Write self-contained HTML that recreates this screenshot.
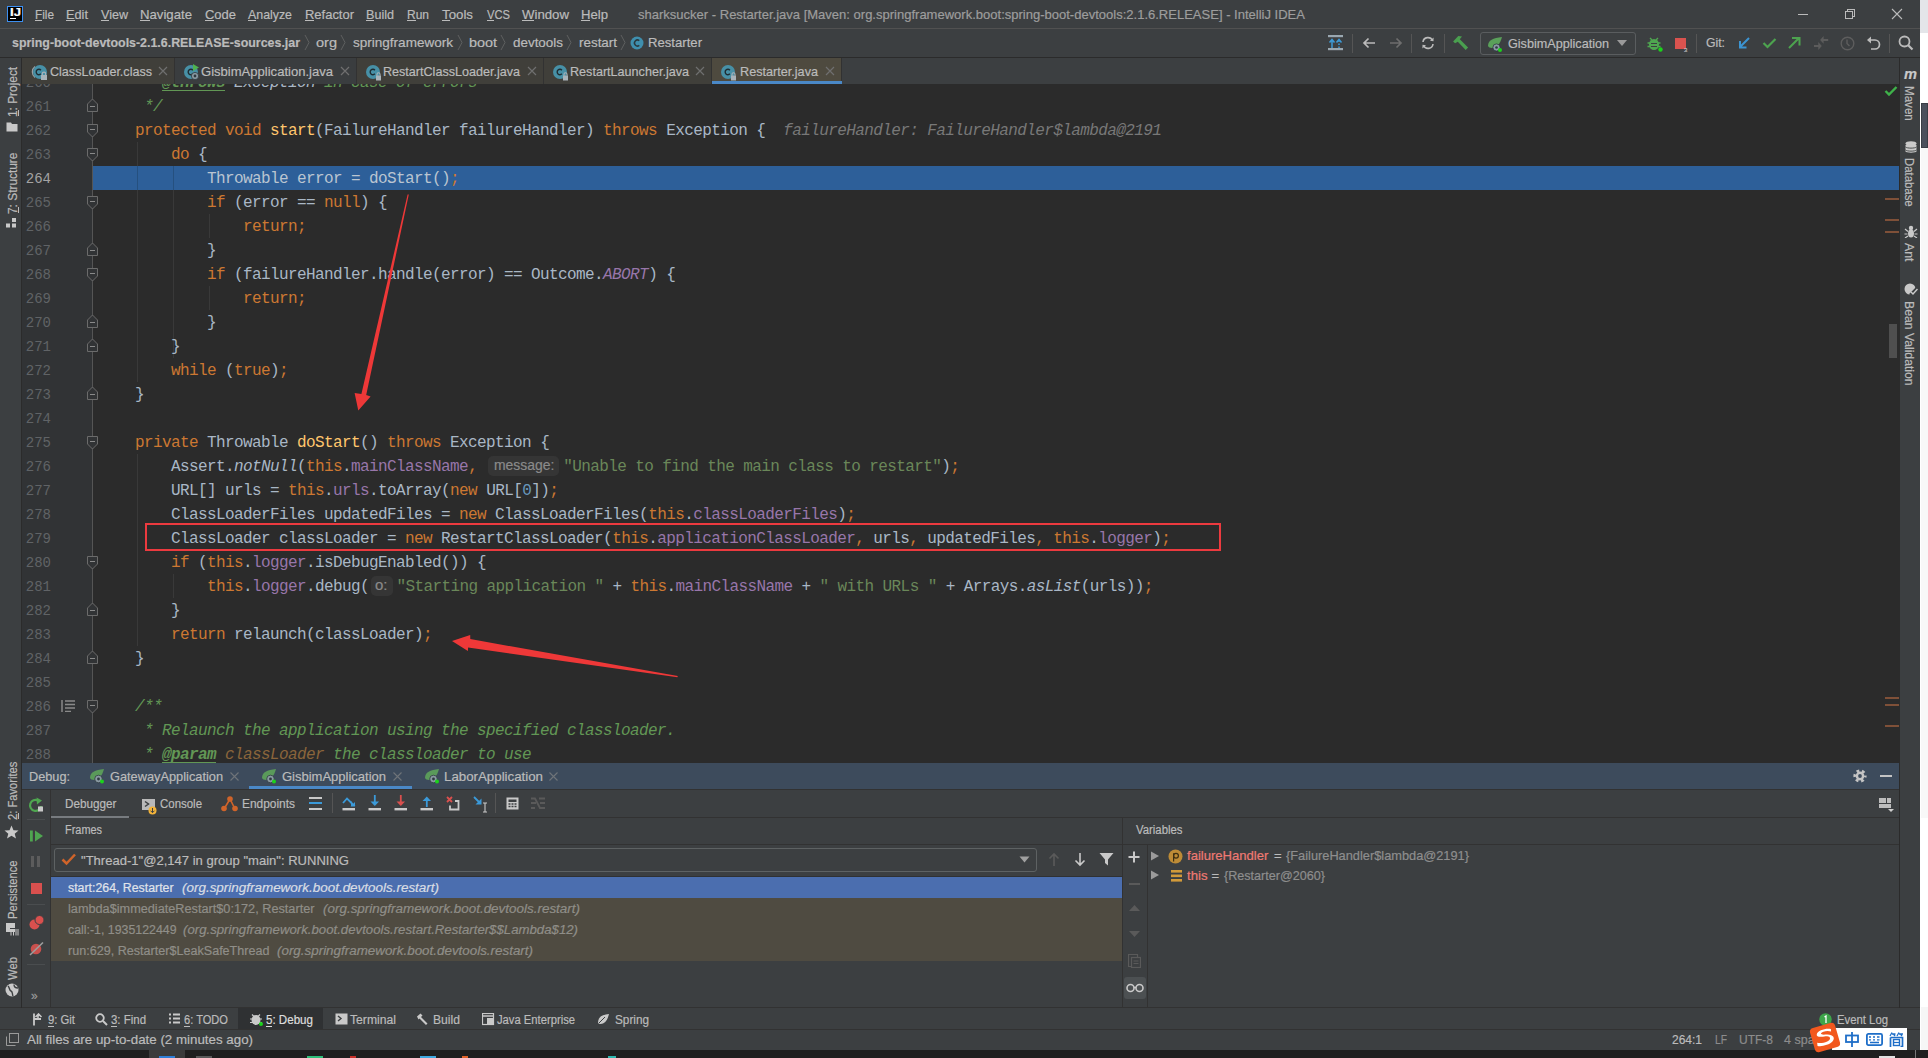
<!DOCTYPE html><html><head><meta charset="utf-8"><style>
*{margin:0;padding:0;box-sizing:border-box}
html,body{width:1928px;height:1058px;overflow:hidden;background:#fafafa}
body{position:relative;font-family:"Liberation Sans", sans-serif;font-size:13px;color:#bbbbbb}
.a{position:absolute;display:block}
.t{position:absolute;white-space:pre;line-height:1;-webkit-text-stroke:0.2px currentColor}
.code{position:absolute;left:99px;white-space:pre;font-family:"Liberation Mono", monospace;font-size:16px;letter-spacing:-0.6px;line-height:24px;height:24px;color:#a9b7c6}
.ln{position:absolute;left:11px;width:40px;text-align:right;font-family:"Liberation Mono", monospace;font-size:14px;line-height:24px;color:#606366}
.k{color:#cc7832} .m{color:#ffc66d} .f{color:#9876aa} .fi{color:#9876aa;font-style:italic}
.s{color:#6a8759} .n{color:#6897bb} .c{color:#629755;font-style:italic} .i{font-style:italic}
.hv{color:#787878;font-style:italic}
.cb{color:#629755;font-style:italic;font-weight:bold;text-decoration:underline;text-underline-offset:3px}
.cp{color:#8a653b;font-style:italic}
</style></head><body>
<div class="a" style="left:0px;top:0px;width:1920px;height:1050px;background:#3c3f41;"></div>
<div class="a" style="left:1920px;top:0px;width:8px;height:33px;background:#e4e5e9;"></div>
<div class="a" style="left:1920px;top:33px;width:8px;height:1017px;background:#ffffff;"></div>
<div class="a" style="left:1921px;top:103px;width:7px;height:45px;background:#4b505c;border:1px solid #3a3e46"></div>
<div class="a" style="left:1921px;top:148px;width:7px;height:670px;background:#f8f8f8;"></div>
<div class="a" style="left:1921px;top:1007px;width:7px;height:43px;background:#f6f6f6;"></div>
<div class="a" style="left:0px;top:1050px;width:1928px;height:8px;background:#1f1f1f;"></div>
<div class="a" style="left:149px;top:1050px;width:36px;height:8px;background:#3b3b3b;"></div>
<div class="a" style="left:0px;top:28px;width:1920px;height:1px;background:#515151;"></div>
<div class="a" style="left:7px;top:6px;width:16px;height:16px;background:#000;border:1px solid #3d8ff0"></div>
<div class="t" style="left:9.5px;top:8.04px;font-size:10px;color:#ffffff;font-weight:bold;transform:scaleX(1.3190);transform-origin:0 0;">IJ</div>
<div class="a" style="left:10px;top:18px;width:6px;height:1px;background:#ffffff;"></div>
<div class="t" style="left:35px;top:8.00px;font-size:13px;color:#bbbbbb;transform:scaleX(0.9070);transform-origin:0 0;">File</div>
<div class="a" style="left:35px;top:20px;width:7px;height:1px;background:#bbbbbb;"></div>
<div class="t" style="left:66px;top:8.00px;font-size:13px;color:#bbbbbb;transform:scaleX(0.9821);transform-origin:0 0;">Edit</div>
<div class="a" style="left:66px;top:20px;width:9px;height:1px;background:#bbbbbb;"></div>
<div class="t" style="left:101px;top:8.00px;font-size:13px;color:#bbbbbb;transform:scaleX(0.9663);transform-origin:0 0;">View</div>
<div class="a" style="left:101px;top:20px;width:8px;height:1px;background:#bbbbbb;"></div>
<div class="t" style="left:140px;top:8.00px;font-size:13px;color:#bbbbbb;transform:scaleX(1.0135);transform-origin:0 0;">Navigate</div>
<div class="a" style="left:140px;top:20px;width:10px;height:1px;background:#bbbbbb;"></div>
<div class="t" style="left:205px;top:8.00px;font-size:13px;color:#bbbbbb;transform:scaleX(0.9975);transform-origin:0 0;">Code</div>
<div class="a" style="left:205px;top:20px;width:9px;height:1px;background:#bbbbbb;"></div>
<div class="t" style="left:248px;top:8.00px;font-size:13px;color:#bbbbbb;transform:scaleX(0.9514);transform-origin:0 0;">Analyze</div>
<div class="a" style="left:248px;top:20px;width:8px;height:1px;background:#bbbbbb;"></div>
<div class="t" style="left:305px;top:8.00px;font-size:13px;color:#bbbbbb;transform:scaleX(0.9973);transform-origin:0 0;">Refactor</div>
<div class="a" style="left:305px;top:20px;width:9px;height:1px;background:#bbbbbb;"></div>
<div class="t" style="left:366px;top:8.00px;font-size:13px;color:#bbbbbb;transform:scaleX(0.9686);transform-origin:0 0;">Build</div>
<div class="a" style="left:366px;top:20px;width:8px;height:1px;background:#bbbbbb;"></div>
<div class="t" style="left:407px;top:8.00px;font-size:13px;color:#bbbbbb;transform:scaleX(0.9225);transform-origin:0 0;">Run</div>
<div class="a" style="left:407px;top:20px;width:9px;height:1px;background:#bbbbbb;"></div>
<div class="t" style="left:442px;top:8.00px;font-size:13px;color:#bbbbbb;transform:scaleX(1.0215);transform-origin:0 0;">Tools</div>
<div class="a" style="left:442px;top:20px;width:8px;height:1px;background:#bbbbbb;"></div>
<div class="t" style="left:487px;top:8.00px;font-size:13px;color:#bbbbbb;transform:scaleX(0.8605);transform-origin:0 0;">VCS</div>
<div class="a" style="left:487px;top:20px;width:7px;height:1px;background:#bbbbbb;"></div>
<div class="t" style="left:522px;top:8.00px;font-size:13px;color:#bbbbbb;transform:scaleX(1.0165);transform-origin:0 0;">Window</div>
<div class="a" style="left:522px;top:20px;width:12px;height:1px;background:#bbbbbb;"></div>
<div class="t" style="left:581px;top:8.00px;font-size:13px;color:#bbbbbb;transform:scaleX(1.0099);transform-origin:0 0;">Help</div>
<div class="a" style="left:581px;top:20px;width:9px;height:1px;background:#bbbbbb;"></div>
<div class="t" style="left:638px;top:8.00px;font-size:13px;color:#9d9d9d;transform:scaleX(1.0012);transform-origin:0 0;">sharksucker - Restarter.java [Maven: org.springframework.boot:spring-boot-devtools:2.1.6.RELEASE] - IntelliJ IDEA</div>
<div class="a" style="left:1798px;top:14px;width:10px;height:1px;background:#bbbbbb;"></div>
<div class="a" style="left:1847px;top:9px;width:8px;height:8px;background:transparent;border:1px solid #bbbbbb"></div>
<div class="a" style="left:1845px;top:11px;width:8px;height:8px;background:#3c3f41;border:1px solid #bbbbbb"></div>
<svg class="a" style="left:1891px;top:8px;" width="12" height="12" viewBox="0 0 12 12"><path d="M1 1L11 11M11 1L1 11" stroke="#bbbbbb" stroke-width="1.1"/></svg>
<div class="a" style="left:0px;top:57px;width:1920px;height:1px;background:#2b2b2b;"></div>
<div class="t" style="left:12px;top:36.00px;font-size:13px;color:#bbbbbb;font-weight:bold;transform:scaleX(0.9538);transform-origin:0 0;">spring-boot-devtools-2.1.6.RELEASE-sources.jar</div>
<svg class="a" style="left:304px;top:35px;" width="6" height="15" viewBox="0 0 6 15"><path d="M1 0L5 7.5L1 15" stroke="#5e6060" fill="none" stroke-width="1"/></svg>
<svg class="a" style="left:340px;top:35px;" width="6" height="15" viewBox="0 0 6 15"><path d="M1 0L5 7.5L1 15" stroke="#5e6060" fill="none" stroke-width="1"/></svg>
<svg class="a" style="left:457px;top:35px;" width="6" height="15" viewBox="0 0 6 15"><path d="M1 0L5 7.5L1 15" stroke="#5e6060" fill="none" stroke-width="1"/></svg>
<svg class="a" style="left:500px;top:35px;" width="6" height="15" viewBox="0 0 6 15"><path d="M1 0L5 7.5L1 15" stroke="#5e6060" fill="none" stroke-width="1"/></svg>
<svg class="a" style="left:566px;top:35px;" width="6" height="15" viewBox="0 0 6 15"><path d="M1 0L5 7.5L1 15" stroke="#5e6060" fill="none" stroke-width="1"/></svg>
<svg class="a" style="left:620px;top:35px;" width="6" height="15" viewBox="0 0 6 15"><path d="M1 0L5 7.5L1 15" stroke="#5e6060" fill="none" stroke-width="1"/></svg>
<div class="t" style="left:316px;top:36.00px;font-size:13px;color:#bbbbbb;transform:scaleX(1.1177);transform-origin:0 0;">org</div>
<div class="t" style="left:353px;top:36.00px;font-size:13px;color:#bbbbbb;transform:scaleX(1.0408);transform-origin:0 0;">springframework</div>
<div class="t" style="left:469px;top:36.00px;font-size:13px;color:#bbbbbb;transform:scaleX(1.1066);transform-origin:0 0;">boot</div>
<div class="t" style="left:513px;top:36.00px;font-size:13px;color:#bbbbbb;transform:scaleX(1.0326);transform-origin:0 0;">devtools</div>
<div class="t" style="left:579px;top:36.00px;font-size:13px;color:#bbbbbb;transform:scaleX(1.0314);transform-origin:0 0;">restart</div>
<div class="t" style="left:648px;top:36.00px;font-size:13px;color:#bbbbbb;transform:scaleX(1.0101);transform-origin:0 0;">Restarter</div>
<svg class="a" style="left:630px;top:36px;" width="14" height="14" viewBox="0 0 14 14"><circle cx="7" cy="7" r="6.5" fill="#3f8fae"/><path d="M9.3 4.6A3 3 0 1 0 9.3 9.4" stroke="#2a3a40" stroke-width="1.5" fill="none"/></svg>
<div class="a" style="left:1352px;top:34px;width:1px;height:19px;background:#555555;"></div>
<div class="a" style="left:1411px;top:34px;width:1px;height:19px;background:#555555;"></div>
<div class="a" style="left:1444px;top:34px;width:1px;height:19px;background:#555555;"></div>
<div class="a" style="left:1696px;top:34px;width:1px;height:19px;background:#555555;"></div>
<div class="a" style="left:1889px;top:34px;width:1px;height:19px;background:#555555;"></div>
<svg class="a" style="left:1328px;top:35px;" width="16" height="16" viewBox="0 0 16 16"><rect x="0" y="0" width="15" height="2.2" fill="#9aa7b0"/><rect x="0" y="13" width="15" height="2.2" fill="#9aa7b0"/><path d="M4 13V5M1.5 7.5L4 4.5L6.5 7.5" stroke="#3d9ad6" stroke-width="1.5" fill="none"/><path d="M11 13V5" stroke="#3d9ad6" stroke-width="1.5" stroke-dasharray="1.5 1.5" fill="none"/><path d="M8.5 7.5L11 4.5L13.5 7.5" stroke="#3d9ad6" stroke-width="1.5" fill="none"/></svg>
<svg class="a" style="left:1362px;top:37px;" width="14" height="12" viewBox="0 0 14 12"><path d="M13 6H2M6.5 1.5L2 6L6.5 10.5" stroke="#bbbbbb" stroke-width="1.7" fill="none"/></svg>
<svg class="a" style="left:1389px;top:37px;" width="14" height="12" viewBox="0 0 14 12"><path d="M1 6H12M7.5 1.5L12 6L7.5 10.5" stroke="#6e6e6e" stroke-width="1.7" fill="none"/></svg>
<svg class="a" style="left:1421px;top:36px;" width="14" height="14" viewBox="0 0 14 14"><path d="M2 6A5 5 0 0 1 11.5 4.5M12 8A5 5 0 0 1 2.5 9.5" stroke="#bbbbbb" stroke-width="1.6" fill="none"/><path d="M9 4.8L12.5 5.2L12.6 1.6Z M5 9.2L1.5 8.8L1.4 12.4Z" fill="#bbbbbb"/></svg>
<svg class="a" style="left:1446px;top:30px;" width="26" height="24" viewBox="0 0 26 24"><path d="M7.1 11.5L12.3 6L16 6.4L13.8 9.3L22.1 17.4L19.7 19.9L11.8 11.8L9.1 13.3Z" fill="#4a9f4f"/></svg>
<div class="a" style="left:1480px;top:32px;width:156px;height:23px;background:transparent;border:1px solid #5a5d5f;border-radius:3px"></div>
<svg class="a" style="left:1487px;top:36px;" width="18" height="16" viewBox="0 0 18 16"><path d="M1 10C1 4 6 2 15 1C13 8 10 12 5 12C3 12 1.5 11 1 10Z" fill="#5aa05a"/><circle cx="9.5" cy="11.5" r="3.6" fill="#8a9aa3" stroke="#2f3a40" stroke-width="0.8"/><circle cx="9.5" cy="11.5" r="1.3" fill="#2f3a40"/><circle cx="13" cy="14" r="2" fill="#1bd31b"/></svg>
<div class="t" style="left:1508px;top:37.00px;font-size:13px;color:#bbbbbb;transform:scaleX(0.9707);transform-origin:0 0;">GisbimApplication</div>
<svg class="a" style="left:1617px;top:40px;" width="10" height="6" viewBox="0 0 10 6"><path d="M0 0H10L5 6Z" fill="#9a9a9a"/></svg>
<svg class="a" style="left:1647px;top:36px;" width="16" height="16" viewBox="0 0 16 16"><ellipse cx="7" cy="8.5" rx="5" ry="5.5" fill="#4fa650"/><path d="M3 2L5 4M11 2L9 4M0.5 7H13.5M0.5 10.5H13.5" stroke="#4fa650" stroke-width="1.4"/><path d="M4 7.5H10M4 10.5H10" stroke="#3c3f41" stroke-width="1"/><circle cx="13.5" cy="13.5" r="2.2" fill="#1bd31b"/></svg>
<div class="a" style="left:1675px;top:38px;width:11px;height:11px;background:#d9534f;"></div>
<div class="t" style="left:1684px;top:46.92px;font-size:6px;color:#bbbbbb;">3</div>
<div class="t" style="left:1706px;top:36.00px;font-size:13px;color:#bbbbbb;transform:scaleX(0.9395);transform-origin:0 0;">Git:</div>
<svg class="a" style="left:1738px;top:37px;" width="12" height="12" viewBox="0 0 12 12"><path d="M11 1L2 10M2 4V10.5H8.5" stroke="#3c94d1" stroke-width="2" fill="none"/></svg>
<svg class="a" style="left:1762px;top:37px;" width="15" height="12" viewBox="0 0 15 12"><path d="M1.5 6L5.5 10L13.5 2" stroke="#4da34f" stroke-width="2.2" fill="none"/></svg>
<svg class="a" style="left:1788px;top:37px;" width="13" height="12" viewBox="0 0 13 12"><path d="M1 11L11 1M4 1H11.5V8.5" stroke="#4da34f" stroke-width="2" fill="none"/></svg>
<svg class="a" style="left:1808px;top:32px;" width="26" height="22" viewBox="0 0 26 22"><path d="M12.1 8L15.6 4V11.7Z M13.75 14L10.3 10V17.9Z" fill="#5c5c5c"/><path d="M15 8H20.2M6 14H11" stroke="#5c5c5c" stroke-width="2"/></svg>
<svg class="a" style="left:1840px;top:36px;" width="15" height="15" viewBox="0 0 15 15"><circle cx="7.5" cy="7.5" r="6.3" stroke="#5d5d5d" stroke-width="1.4" fill="none"/><path d="M7 3.5V7.5L9.5 10" stroke="#5d5d5d" stroke-width="1.4" fill="none"/></svg>
<svg class="a" style="left:1866px;top:36px;" width="15" height="15" viewBox="0 0 15 15"><path d="M4 4H9A4.5 4.5 0 0 1 9 13H5" stroke="#bbbbbb" stroke-width="1.7" fill="none"/><path d="M1 4L5 0.5V7.5Z" fill="#bbbbbb"/></svg>
<svg class="a" style="left:1898px;top:35px;" width="16" height="16" viewBox="0 0 16 16"><circle cx="6.5" cy="6.5" r="5" stroke="#bbbbbb" stroke-width="1.8" fill="none"/><path d="M10 10L14.5 14.5" stroke="#bbbbbb" stroke-width="2.2"/></svg>
<div class="a" style="left:21px;top:84px;width:1879px;height:679px;background:#2b2b2b;"></div>
<div class="a" style="left:21px;top:84px;width:72px;height:679px;background:#313335;"></div>
<div class="a" style="left:92px;top:84px;width:1px;height:679px;background:#555555;"></div>
<div class="a" style="left:93px;top:166px;width:1807px;height:24px;background:#2d5f99;"></div>
<div class="a" style="left:137px;top:142px;width:1px;height:24px;background:#393939;"></div>
<div class="a" style="left:137px;top:166px;width:1px;height:24px;background:#25507f;"></div>
<div class="a" style="left:137px;top:190px;width:1px;height:192px;background:#393939;"></div>
<div class="a" style="left:173px;top:166px;width:1px;height:0px;background:#393939;"></div>
<div class="a" style="left:173px;top:166px;width:1px;height:24px;background:#25507f;"></div>
<div class="a" style="left:173px;top:190px;width:1px;height:168px;background:#393939;"></div>
<div class="a" style="left:209px;top:214px;width:1px;height:24px;background:#393939;"></div>
<div class="a" style="left:209px;top:286px;width:1px;height:24px;background:#393939;"></div>
<div class="a" style="left:137px;top:454px;width:1px;height:192px;background:#393939;"></div>
<div class="a" style="left:173px;top:574px;width:1px;height:24px;background:#393939;"></div>
<div class="a" style="left:93px;top:84px;width:1807px;height:679px;overflow:hidden">
<div class="code" style="left:6px;top:-13px"><span class="c">     * </span><span class="cb">@throws</span><span class="i"> Exception</span><span class="c"> in case of errors</span></div>
<div class="code" style="left:6px;top:11px"><span class="c">     */</span></div>
<div class="code" style="left:6px;top:35px"><span class="k">    protected void </span><span class="m">start</span>(FailureHandler failureHandler) <span class="k">throws</span> Exception {  <span class="hv">failureHandler: FailureHandler$lambda@2191</span></div>
<div class="code" style="left:6px;top:59px"><span class="k">        do</span> {</div>
<div class="code" style="left:6px;top:83px"><span style="color:#bac5d1">            Throwable error = doStart()</span><span class="k">;</span></div>
<div class="code" style="left:6px;top:107px"><span class="k">            if</span> (error == <span class="k">null</span>) {</div>
<div class="code" style="left:6px;top:131px"><span class="k">                return;</span></div>
<div class="code" style="left:6px;top:155px">            }</div>
<div class="code" style="left:6px;top:179px"><span class="k">            if</span> (failureHandler.handle(error) == Outcome.<span class="fi">ABORT</span>) {</div>
<div class="code" style="left:6px;top:203px"><span class="k">                return;</span></div>
<div class="code" style="left:6px;top:227px">            }</div>
<div class="code" style="left:6px;top:251px">        }</div>
<div class="code" style="left:6px;top:275px"><span class="k">        while</span> (<span class="k">true</span>)<span class="k">;</span></div>
<div class="code" style="left:6px;top:299px">    }</div>
<div class="code" style="left:6px;top:347px"><span class="k">    private</span> Throwable <span class="m">doStart</span>() <span class="k">throws</span> Exception {</div>
<div class="code" style="left:6px;top:371px">        Assert.<span class="i">notNull</span>(<span class="k">this</span>.<span class="f">mainClassName</span><span class="k">,</span><span style="display:inline-block;width:86px"></span><span class="s">&quot;Unable to find the main class to restart&quot;</span>)<span class="k">;</span></div>
<div class="code" style="left:6px;top:395px">        URL[] urls = <span class="k">this</span>.<span class="f">urls</span>.toArray(<span class="k">new</span> URL[<span class="n">0</span>])<span class="k">;</span></div>
<div class="code" style="left:6px;top:419px">        ClassLoaderFiles updatedFiles = <span class="k">new</span> ClassLoaderFiles(<span class="k">this</span>.<span class="f">classLoaderFiles</span>)<span class="k">;</span></div>
<div class="code" style="left:6px;top:443px">        ClassLoader classLoader = <span class="k">new</span> RestartClassLoader(<span class="k">this</span>.<span class="f">applicationClassLoader</span><span class="k">,</span> urls<span class="k">,</span> updatedFiles<span class="k">, this</span>.<span class="f">logger</span>)<span class="k">;</span></div>
<div class="code" style="left:6px;top:467px"><span class="k">        if</span> (<span class="k">this</span>.<span class="f">logger</span>.isDebugEnabled()) {</div>
<div class="code" style="left:6px;top:491px"><span class="k">            this</span>.<span class="f">logger</span>.debug(<span style="display:inline-block;width:27.4px"></span><span class="s">&quot;Starting application &quot;</span> + <span class="k">this</span>.<span class="f">mainClassName</span> + <span class="s">&quot; with URLs &quot;</span> + Arrays.<span class="i">asList</span>(urls))<span class="k">;</span></div>
<div class="code" style="left:6px;top:515px">        }</div>
<div class="code" style="left:6px;top:539px"><span class="k">        return</span> relaunch(classLoader)<span class="k">;</span></div>
<div class="code" style="left:6px;top:563px">    }</div>
<div class="code" style="left:6px;top:611px"><span class="c">    /**</span></div>
<div class="code" style="left:6px;top:635px"><span class="c">     * Relaunch the application using the specified classloader.</span></div>
<div class="code" style="left:6px;top:659px"><span class="c">     * </span><span class="cb">@param</span><span class="cp"> classLoader</span><span class="c"> the classloader to use</span></div>
</div>
<div class="a" style="left:488px;top:456px;width:71px;height:19.5px;background:#353535;border-radius:5px"></div>
<div class="t" style="left:493.7px;top:458.15px;font-size:14px;color:#8a8a8a;transform:scaleX(0.9951);transform-origin:0 0;">message:</div>
<div class="a" style="left:371px;top:576px;width:22px;height:19.5px;background:#353535;border-radius:5px"></div>
<div class="t" style="left:375px;top:578.15px;font-size:14px;color:#8a8a8a;transform:scaleX(1.0706);transform-origin:0 0;">o:</div>
<div class="a" style="left:0;top:84px;width:93px;height:679px;overflow:hidden">
<div class="ln" style="top:-13px;color:#606366">260</div>
<div class="ln" style="top:11px;color:#606366">261</div>
<div class="ln" style="top:35px;color:#606366">262</div>
<div class="ln" style="top:59px;color:#606366">263</div>
<div class="ln" style="top:83px;color:#a4a3a3">264</div>
<div class="ln" style="top:107px;color:#606366">265</div>
<div class="ln" style="top:131px;color:#606366">266</div>
<div class="ln" style="top:155px;color:#606366">267</div>
<div class="ln" style="top:179px;color:#606366">268</div>
<div class="ln" style="top:203px;color:#606366">269</div>
<div class="ln" style="top:227px;color:#606366">270</div>
<div class="ln" style="top:251px;color:#606366">271</div>
<div class="ln" style="top:275px;color:#606366">272</div>
<div class="ln" style="top:299px;color:#606366">273</div>
<div class="ln" style="top:323px;color:#606366">274</div>
<div class="ln" style="top:347px;color:#606366">275</div>
<div class="ln" style="top:371px;color:#606366">276</div>
<div class="ln" style="top:395px;color:#606366">277</div>
<div class="ln" style="top:419px;color:#606366">278</div>
<div class="ln" style="top:443px;color:#606366">279</div>
<div class="ln" style="top:467px;color:#606366">280</div>
<div class="ln" style="top:491px;color:#606366">281</div>
<div class="ln" style="top:515px;color:#606366">282</div>
<div class="ln" style="top:539px;color:#606366">283</div>
<div class="ln" style="top:563px;color:#606366">284</div>
<div class="ln" style="top:587px;color:#606366">285</div>
<div class="ln" style="top:611px;color:#606366">286</div>
<div class="ln" style="top:635px;color:#606366">287</div>
<div class="ln" style="top:659px;color:#606366">288</div>
</div>
<svg class="a" style="left:86px;top:124px;" width="13" height="14" viewBox="0 0 13 14"><path d="M1.5 0.5H11.5V8L6.5 13L1.5 8Z" fill="#313335" stroke="#6b6b6b" stroke-width="1"/><path d="M4 5.5H9" stroke="#8a8a8a" stroke-width="1"/></svg>
<svg class="a" style="left:86px;top:148px;" width="13" height="14" viewBox="0 0 13 14"><path d="M1.5 0.5H11.5V8L6.5 13L1.5 8Z" fill="#313335" stroke="#6b6b6b" stroke-width="1"/><path d="M4 5.5H9" stroke="#8a8a8a" stroke-width="1"/></svg>
<svg class="a" style="left:86px;top:196px;" width="13" height="14" viewBox="0 0 13 14"><path d="M1.5 0.5H11.5V8L6.5 13L1.5 8Z" fill="#313335" stroke="#6b6b6b" stroke-width="1"/><path d="M4 5.5H9" stroke="#8a8a8a" stroke-width="1"/></svg>
<svg class="a" style="left:86px;top:268px;" width="13" height="14" viewBox="0 0 13 14"><path d="M1.5 0.5H11.5V8L6.5 13L1.5 8Z" fill="#313335" stroke="#6b6b6b" stroke-width="1"/><path d="M4 5.5H9" stroke="#8a8a8a" stroke-width="1"/></svg>
<svg class="a" style="left:86px;top:436px;" width="13" height="14" viewBox="0 0 13 14"><path d="M1.5 0.5H11.5V8L6.5 13L1.5 8Z" fill="#313335" stroke="#6b6b6b" stroke-width="1"/><path d="M4 5.5H9" stroke="#8a8a8a" stroke-width="1"/></svg>
<svg class="a" style="left:86px;top:556px;" width="13" height="14" viewBox="0 0 13 14"><path d="M1.5 0.5H11.5V8L6.5 13L1.5 8Z" fill="#313335" stroke="#6b6b6b" stroke-width="1"/><path d="M4 5.5H9" stroke="#8a8a8a" stroke-width="1"/></svg>
<svg class="a" style="left:86px;top:700px;" width="13" height="14" viewBox="0 0 13 14"><path d="M1.5 0.5H11.5V8L6.5 13L1.5 8Z" fill="#313335" stroke="#6b6b6b" stroke-width="1"/><path d="M4 5.5H9" stroke="#8a8a8a" stroke-width="1"/></svg>
<svg class="a" style="left:86px;top:98px;" width="13" height="14" viewBox="0 0 13 14"><path d="M1.5 13.5H11.5V6L6.5 1L1.5 6Z" fill="#313335" stroke="#6b6b6b" stroke-width="1"/><path d="M4 8.5H9" stroke="#8a8a8a" stroke-width="1"/></svg>
<svg class="a" style="left:86px;top:242px;" width="13" height="14" viewBox="0 0 13 14"><path d="M1.5 13.5H11.5V6L6.5 1L1.5 6Z" fill="#313335" stroke="#6b6b6b" stroke-width="1"/><path d="M4 8.5H9" stroke="#8a8a8a" stroke-width="1"/></svg>
<svg class="a" style="left:86px;top:314px;" width="13" height="14" viewBox="0 0 13 14"><path d="M1.5 13.5H11.5V6L6.5 1L1.5 6Z" fill="#313335" stroke="#6b6b6b" stroke-width="1"/><path d="M4 8.5H9" stroke="#8a8a8a" stroke-width="1"/></svg>
<svg class="a" style="left:86px;top:338px;" width="13" height="14" viewBox="0 0 13 14"><path d="M1.5 13.5H11.5V6L6.5 1L1.5 6Z" fill="#313335" stroke="#6b6b6b" stroke-width="1"/><path d="M4 8.5H9" stroke="#8a8a8a" stroke-width="1"/></svg>
<svg class="a" style="left:86px;top:386px;" width="13" height="14" viewBox="0 0 13 14"><path d="M1.5 13.5H11.5V6L6.5 1L1.5 6Z" fill="#313335" stroke="#6b6b6b" stroke-width="1"/><path d="M4 8.5H9" stroke="#8a8a8a" stroke-width="1"/></svg>
<svg class="a" style="left:86px;top:602px;" width="13" height="14" viewBox="0 0 13 14"><path d="M1.5 13.5H11.5V6L6.5 1L1.5 6Z" fill="#313335" stroke="#6b6b6b" stroke-width="1"/><path d="M4 8.5H9" stroke="#8a8a8a" stroke-width="1"/></svg>
<svg class="a" style="left:86px;top:650px;" width="13" height="14" viewBox="0 0 13 14"><path d="M1.5 13.5H11.5V6L6.5 1L1.5 6Z" fill="#313335" stroke="#6b6b6b" stroke-width="1"/><path d="M4 8.5H9" stroke="#8a8a8a" stroke-width="1"/></svg>
<svg class="a" style="left:61px;top:700px;" width="15" height="12" viewBox="0 0 15 12"><path d="M1 0V12" stroke="#8a8a8a" stroke-width="1.5"/><path d="M4 1H14M4 4.5H14M4 8H14M4 11.5H10" stroke="#8a8a8a" stroke-width="1.5"/></svg>
<div class="a" style="left:145px;top:523px;width:1076px;height:28px;background:transparent;border:2.5px solid #ec3a3f"></div>
<svg class="a" style="left:0px;top:0px;" width="800" height="760" viewBox="0 0 800 760"><path d="M408.8 194.5L366.2 395L370.6 396.6L358.3 410.5L354.6 392.9L361.4 393.9L407.6 194.5Z" fill="#ee3838"/><path d="M452 641L470.2 635L470.3 639.1L677.8 676.1L677.4 677.2L468.1 647.5L467.9 650.9Z" fill="#ee3838"/></svg>
<div class="a" style="left:1885px;top:198px;width:14px;height:2px;background:#7f5038;"></div>
<div class="a" style="left:1885px;top:219px;width:14px;height:2px;background:#7f5038;"></div>
<div class="a" style="left:1885px;top:231px;width:14px;height:2px;background:#7f5038;"></div>
<div class="a" style="left:1885px;top:697px;width:14px;height:2px;background:#7f5038;"></div>
<div class="a" style="left:1885px;top:704px;width:14px;height:2px;background:#7f5038;"></div>
<div class="a" style="left:1885px;top:725px;width:14px;height:2px;background:#7f5038;"></div>
<div class="a" style="left:1889px;top:324px;width:8px;height:34px;background:#4f4f4f;"></div>
<svg class="a" style="left:1884px;top:85px;" width="14" height="12" viewBox="0 0 14 12"><path d="M1.5 6L5 9.5L12.5 2" stroke="#3fb24a" stroke-width="2.4" fill="none"/></svg>
<div class="a" style="left:21px;top:58px;width:1879px;height:26px;background:#3c3f41;"></div>
<div class="a" style="left:22px;top:58px;width:152px;height:26px;background:#403f3a;"></div>
<div class="a" style="left:174px;top:58px;width:1px;height:26px;background:#323232;"></div>
<svg class="a" style="left:31px;top:64px;" width="17" height="17" viewBox="0 0 17 17"><path d="M4 2.5A7 7 0 0 0 4 13.5" stroke="#9aa0a4" stroke-width="1.2" fill="none"/><circle cx="9" cy="8" r="7" fill="#4790a6"/><path d="M9.9 6.2A2.7 2.7 0 1 0 9.9 9.8" stroke="#1f2d33" stroke-width="1.4" fill="none"/><rect x="10" y="11" width="6" height="5" fill="#a9b3b9"/><path d="M11.3 11.5V9.8A1.7 1.7 0 0 1 14.7 9.8V11.5" stroke="#a9b3b9" stroke-width="1.2" fill="none"/></svg>
<div class="t" style="left:50px;top:65.00px;font-size:13px;color:#bbbbbb;transform:scaleX(0.9668);transform-origin:0 0;">ClassLoader.class</div>
<svg class="a" style="left:158px;top:66px;" width="10" height="10" viewBox="0 0 10 10"><path d="M1 1L9 9M9 1L1 9" stroke="#6f6f6f" stroke-width="1.2"/></svg>
<div class="a" style="left:175px;top:58px;width:181px;height:26px;background:#3a3d3f;"></div>
<div class="a" style="left:356px;top:58px;width:1px;height:26px;background:#323232;"></div>
<svg class="a" style="left:183px;top:64px;" width="17" height="17" viewBox="0 0 17 17"><circle cx="8" cy="8" r="7" fill="#4790a6"/><path d="M9.9 6.2A2.7 2.7 0 1 0 9.9 9.8" stroke="#1f2d33" stroke-width="1.4" fill="none"/><path d="M10 0L16 3.5L10 7Z" fill="#4fb34f"/><circle cx="12" cy="12" r="3.6" fill="#8a9aa3" stroke="#2f3a40" stroke-width="0.8"/><circle cx="12" cy="12" r="1.4" fill="#2f3a40"/></svg>
<div class="t" style="left:201px;top:65.00px;font-size:13px;color:#bbbbbb;transform:scaleX(1.0038);transform-origin:0 0;">GisbimApplication.java</div>
<svg class="a" style="left:340px;top:66px;" width="10" height="10" viewBox="0 0 10 10"><path d="M1 1L9 9M9 1L1 9" stroke="#6f6f6f" stroke-width="1.2"/></svg>
<div class="a" style="left:357px;top:58px;width:186px;height:26px;background:#403f3a;"></div>
<div class="a" style="left:543px;top:58px;width:1px;height:26px;background:#323232;"></div>
<svg class="a" style="left:365px;top:64px;" width="17" height="17" viewBox="0 0 17 17"><circle cx="8" cy="8" r="7" fill="#4790a6"/><path d="M9.9 6.2A2.7 2.7 0 1 0 9.9 9.8" stroke="#1f2d33" stroke-width="1.4" fill="none"/><rect x="11" y="11.5" width="5" height="5" fill="#a9b3b9"/><path d="M12 11.8V10.3A1.5 1.5 0 0 1 15 10.3V11.8" stroke="#a9b3b9" stroke-width="1.1" fill="none"/></svg>
<div class="t" style="left:383px;top:65.00px;font-size:13px;color:#bbbbbb;transform:scaleX(0.9673);transform-origin:0 0;">RestartClassLoader.java</div>
<svg class="a" style="left:527px;top:66px;" width="10" height="10" viewBox="0 0 10 10"><path d="M1 1L9 9M9 1L1 9" stroke="#6f6f6f" stroke-width="1.2"/></svg>
<div class="a" style="left:544px;top:58px;width:167px;height:26px;background:#403f3a;"></div>
<div class="a" style="left:711px;top:58px;width:1px;height:26px;background:#323232;"></div>
<svg class="a" style="left:552px;top:64px;" width="17" height="17" viewBox="0 0 17 17"><circle cx="8" cy="8" r="7" fill="#4790a6"/><path d="M9.9 6.2A2.7 2.7 0 1 0 9.9 9.8" stroke="#1f2d33" stroke-width="1.4" fill="none"/><rect x="11" y="11.5" width="5" height="5" fill="#a9b3b9"/><path d="M12 11.8V10.3A1.5 1.5 0 0 1 15 10.3V11.8" stroke="#a9b3b9" stroke-width="1.1" fill="none"/></svg>
<div class="t" style="left:570px;top:65.00px;font-size:13px;color:#bbbbbb;transform:scaleX(0.9686);transform-origin:0 0;">RestartLauncher.java</div>
<svg class="a" style="left:695px;top:66px;" width="10" height="10" viewBox="0 0 10 10"><path d="M1 1L9 9M9 1L1 9" stroke="#6f6f6f" stroke-width="1.2"/></svg>
<div class="a" style="left:712px;top:58px;width:129px;height:26px;background:#4e4a3f;"></div>
<div class="a" style="left:841px;top:58px;width:1px;height:26px;background:#323232;"></div>
<svg class="a" style="left:720px;top:64px;" width="17" height="17" viewBox="0 0 17 17"><circle cx="8" cy="8" r="7" fill="#4790a6"/><path d="M9.9 6.2A2.7 2.7 0 1 0 9.9 9.8" stroke="#1f2d33" stroke-width="1.4" fill="none"/><rect x="11" y="11.5" width="5" height="5" fill="#a9b3b9"/><path d="M12 11.8V10.3A1.5 1.5 0 0 1 15 10.3V11.8" stroke="#a9b3b9" stroke-width="1.1" fill="none"/></svg>
<div class="t" style="left:740px;top:65.00px;font-size:13px;color:#bbbbbb;transform:scaleX(0.9725);transform-origin:0 0;">Restarter.java</div>
<svg class="a" style="left:825px;top:66px;" width="10" height="10" viewBox="0 0 10 10"><path d="M1 1L9 9M9 1L1 9" stroke="#6f6f6f" stroke-width="1.2"/></svg>
<div class="a" style="left:712px;top:81px;width:130px;height:3px;background:#4a88c7;"></div>
<div class="a" style="left:21px;top:763px;width:1879px;height:245px;background:#3c3f41;"></div>
<div class="a" style="left:21px;top:763px;width:1879px;height:26px;background:#3d4b5c;"></div>
<div class="a" style="left:21px;top:789px;width:1879px;height:1px;background:#323232;"></div>
<div class="t" style="left:28.5px;top:770.00px;font-size:13px;color:#bbbbbb;transform:scaleX(0.9781);transform-origin:0 0;">Debug:</div>
<svg class="a" style="left:89px;top:768px;" width="17" height="16" viewBox="0 0 17 16"><path d="M1 10C1 4 6 2 15 1C13 8 10 12 5 12C3 12 1.5 11 1 10Z" fill="#5a9a5a"/><circle cx="9.5" cy="11" r="3.8" fill="#8a9aa3" stroke="#2f3a40" stroke-width="0.8"/><circle cx="9.5" cy="11" r="1.4" fill="#2f3a40"/><circle cx="13" cy="13.5" r="2" fill="#1bd31b"/></svg>
<div class="t" style="left:109.5px;top:770.00px;font-size:13px;color:#bbbbbb;transform:scaleX(0.9835);transform-origin:0 0;">GatewayApplication</div>
<svg class="a" style="left:230px;top:772px;" width="9" height="9" viewBox="0 0 9 9"><path d="M0.5 0.5L8.5 8.5M8.5 0.5L0.5 8.5" stroke="#6f7479" stroke-width="1.1"/></svg>
<svg class="a" style="left:261px;top:768px;" width="17" height="16" viewBox="0 0 17 16"><path d="M1 10C1 4 6 2 15 1C13 8 10 12 5 12C3 12 1.5 11 1 10Z" fill="#5a9a5a"/><circle cx="9.5" cy="11" r="3.8" fill="#8a9aa3" stroke="#2f3a40" stroke-width="0.8"/><circle cx="9.5" cy="11" r="1.4" fill="#2f3a40"/><circle cx="13" cy="13.5" r="2" fill="#1bd31b"/></svg>
<div class="t" style="left:281.5px;top:770.00px;font-size:13px;color:#bbbbbb;transform:scaleX(0.9996);transform-origin:0 0;">GisbimApplication</div>
<svg class="a" style="left:393px;top:772px;" width="9" height="9" viewBox="0 0 9 9"><path d="M0.5 0.5L8.5 8.5M8.5 0.5L0.5 8.5" stroke="#6f7479" stroke-width="1.1"/></svg>
<svg class="a" style="left:424px;top:768px;" width="17" height="16" viewBox="0 0 17 16"><path d="M1 10C1 4 6 2 15 1C13 8 10 12 5 12C3 12 1.5 11 1 10Z" fill="#5a9a5a"/><circle cx="9.5" cy="11" r="3.8" fill="#8a9aa3" stroke="#2f3a40" stroke-width="0.8"/><circle cx="9.5" cy="11" r="1.4" fill="#2f3a40"/><circle cx="13" cy="13.5" r="2" fill="#1bd31b"/></svg>
<div class="t" style="left:444px;top:770.00px;font-size:13px;color:#bbbbbb;transform:scaleX(1.0222);transform-origin:0 0;">LaborApplication</div>
<svg class="a" style="left:549px;top:772px;" width="9" height="9" viewBox="0 0 9 9"><path d="M0.5 0.5L8.5 8.5M8.5 0.5L0.5 8.5" stroke="#6f7479" stroke-width="1.1"/></svg>
<div class="a" style="left:249px;top:786px;width:163px;height:3px;background:#4a88c7;"></div>
<svg class="a" style="left:1852px;top:768px;" width="16" height="16" viewBox="0 0 16 16"><circle cx="8" cy="8" r="5" fill="none" stroke="#c4c4c4" stroke-width="3.2" stroke-dasharray="2.6 2.636" stroke-dashoffset="1.3"/><circle cx="8" cy="8" r="4.4" fill="#c4c4c4"/><circle cx="8" cy="8" r="1.9" fill="#3d4b5c"/></svg>
<div class="a" style="left:1880px;top:775px;width:12px;height:2px;background:#c4c4c4;"></div>
<div class="a" style="left:50px;top:790px;width:1px;height:218px;background:#323232;"></div>
<div class="a" style="left:27px;top:819px;width:18px;height:1px;background:#4a4d4f;"></div>
<div class="a" style="left:27px;top:904px;width:18px;height:1px;background:#4a4d4f;"></div>
<div class="a" style="left:27px;top:964px;width:18px;height:1px;background:#4a4d4f;"></div>
<svg class="a" style="left:28px;top:797px;" width="17" height="16" viewBox="0 0 17 16"><path d="M13 9A5.5 5.5 0 1 1 10 3.5" stroke="#4fa650" stroke-width="2.2" fill="none"/><path d="M8.5 0.5L14 3.5L9 7.5Z" fill="#4fa650"/><rect x="10" y="9.5" width="5" height="5" fill="#c9c9c9"/></svg>
<svg class="a" style="left:30px;top:830px;" width="14" height="12" viewBox="0 0 14 12"><rect x="0" y="0.5" width="2.8" height="11" fill="#4fa650"/><path d="M5 0.5L13 6L5 11.5Z" fill="#4fa650"/></svg>
<div class="a" style="left:31px;top:856px;width:3px;height:11px;background:#5c5c5c;"></div>
<div class="a" style="left:37px;top:856px;width:3px;height:11px;background:#5c5c5c;"></div>
<div class="a" style="left:31px;top:883px;width:11px;height:11px;background:#d9504e;"></div>
<svg class="a" style="left:29px;top:915px;" width="16" height="15" viewBox="0 0 16 15"><circle cx="5.5" cy="9.5" r="5" fill="#d9504e"/><circle cx="10.5" cy="5" r="4.5" fill="#d9504e" stroke="#3c3f41" stroke-width="1"/></svg>
<svg class="a" style="left:29px;top:941px;" width="16" height="15" viewBox="0 0 16 15"><circle cx="7" cy="8" r="5.3" fill="#c9504d"/><path d="M1 14L14 1.5" stroke="#9e9e9e" stroke-width="1.6"/></svg>
<div class="t" style="left:31px;top:989.84px;font-size:12px;color:#9a9a9a;">»</div>
<div class="a" style="left:51px;top:817px;width:1849px;height:1px;background:#323232;"></div>
<div class="t" style="left:64.5px;top:797.92px;font-size:12.5px;color:#bbbbbb;transform:scaleX(0.9381);transform-origin:0 0;">Debugger</div>
<div class="a" style="left:51px;top:816px;width:78px;height:2px;background:#777b7f;"></div>
<svg class="a" style="left:141px;top:798px;" width="18" height="18" viewBox="0 0 18 18"><rect x="1" y="1" width="13" height="11" fill="#b9b9b9"/><path d="M4 3.5L7.5 6L4 8.5" stroke="#3c3f41" stroke-width="1.5" fill="none"/><circle cx="11.5" cy="12.5" r="4" fill="#f4b43a"/><path d="M11.5 10V14.5M9.5 12.7L11.5 14.7L13.5 12.7" stroke="#3c3f41" stroke-width="1" fill="none"/></svg>
<div class="t" style="left:160px;top:797.92px;font-size:12.5px;color:#bbbbbb;transform:scaleX(0.9158);transform-origin:0 0;">Console</div>
<svg class="a" style="left:221px;top:796px;" width="17" height="16" viewBox="0 0 17 16"><path d="M3 13L9 3L14 13" stroke="#d0642a" stroke-width="1.6" fill="none"/><circle cx="9" cy="3" r="2.8" fill="#d0642a"/><circle cx="3" cy="12.5" r="2.8" fill="#d0642a"/><circle cx="14" cy="12.5" r="2.8" fill="#d0642a"/></svg>
<div class="t" style="left:242px;top:797.92px;font-size:12.5px;color:#bbbbbb;transform:scaleX(0.9533);transform-origin:0 0;">Endpoints</div>
<div class="a" style="left:309px;top:797px;width:13px;height:2.2px;background:#c9c9c9;"></div>
<div class="a" style="left:309px;top:802px;width:13px;height:2.4px;background:#3b9ad9;"></div>
<div class="a" style="left:309px;top:807.5px;width:13px;height:2.2px;background:#c9c9c9;"></div>
<div class="a" style="left:332px;top:793px;width:1px;height:20px;background:#555555;"></div>
<div class="a" style="left:495px;top:793px;width:1px;height:20px;background:#555555;"></div>
<svg class="a" style="left:342px;top:795px;" width="14" height="17" viewBox="0 0 14 17"><path d="M1 8L5 3.5L9.5 8" stroke="#3b9ad9" stroke-width="1.8" fill="none"/><path d="M9 6V11H13.5" fill="#3b9ad9"/><path d="M8.5 11.5L13 11.5L13 7Z" fill="#3b9ad9"/><rect x="0.5" y="13" width="12.5" height="2.4" fill="#c9c9c9"/></svg>
<svg class="a" style="left:368px;top:795px;" width="14" height="17" viewBox="0 0 14 17"><path d="M6.8 0V9" stroke="#3b9ad9" stroke-width="1.8"/><path d="M2.5 6.5L6.8 11L11 6.5Z" fill="#3b9ad9"/><rect x="0.5" y="13" width="12.5" height="2.4" fill="#c9c9c9"/></svg>
<svg class="a" style="left:394px;top:795px;" width="14" height="17" viewBox="0 0 14 17"><path d="M6.8 0V9" stroke="#d9504e" stroke-width="1.8"/><path d="M2.5 6.5L6.8 11L11 6.5Z" fill="#d9504e"/><rect x="0.5" y="13" width="12.5" height="2.4" fill="#c9c9c9"/></svg>
<svg class="a" style="left:420px;top:795px;" width="14" height="17" viewBox="0 0 14 17"><path d="M6.8 12V4" stroke="#3b9ad9" stroke-width="1.8"/><path d="M2.5 6L6.8 1.5L11 6Z" fill="#3b9ad9"/><rect x="0.5" y="13" width="12.5" height="2.4" fill="#c9c9c9"/></svg>
<svg class="a" style="left:446px;top:796px;" width="15" height="16" viewBox="0 0 15 16"><path d="M1 1L6 6M6 1L1 6" stroke="#d9504e" stroke-width="1.8"/><path d="M9 5H12.5V13.5H4V9.5" stroke="#c9c9c9" stroke-width="1.8" fill="none"/></svg>
<svg class="a" style="left:473px;top:796px;" width="16" height="18" viewBox="0 0 16 18"><path d="M1 1L7 7" stroke="#3b9ad9" stroke-width="1.8"/><path d="M2.5 8.5H8.5V2.5Z" fill="#3b9ad9"/><path d="M10 7H14M12 7V16M10 16H14" stroke="#c9c9c9" stroke-width="1.1" fill="none"/></svg>
<svg class="a" style="left:506px;top:797px;" width="13" height="13" viewBox="0 0 13 13"><rect x="0.5" y="0.5" width="12" height="12" fill="#c9c9c9"/><rect x="2.5" y="2.5" width="8" height="2.5" fill="#3c3f41"/><path d="M2.5 7H4.5M5.5 7H7.5M8.5 7H10.5M2.5 9.5H4.5M5.5 9.5H7.5M8.5 9.5H10.5" stroke="#3c3f41" stroke-width="1.3"/></svg>
<svg class="a" style="left:531px;top:797px;" width="14" height="13" viewBox="0 0 14 13"><path d="M0 1.5H4L9 11H14M8 1.5H14M0 6H5M9 6H14M0 11H4" stroke="#5a5a5a" stroke-width="1.8" fill="none"/></svg>
<svg class="a" style="left:1879px;top:798px;" width="16" height="15" viewBox="0 0 16 15"><rect x="0" y="0" width="7" height="5" fill="#bdbdbd"/><rect x="8" y="0" width="4" height="5" fill="#bdbdbd"/><rect x="0" y="6" width="12" height="4" fill="#bdbdbd"/><path d="M9 11H15L12 14Z" fill="#d0d0d0"/></svg>
<div class="a" style="left:51px;top:844px;width:1072px;height:1px;background:#323232;"></div>
<div class="t" style="left:64.5px;top:824.42px;font-size:12.5px;color:#bbbbbb;transform:scaleX(0.8734);transform-origin:0 0;">Frames</div>
<div class="a" style="left:1122px;top:818px;width:1px;height:190px;background:#323232;"></div>
<div class="a" style="left:1123px;top:844px;width:777px;height:1px;background:#323232;"></div>
<div class="t" style="left:1136.4px;top:824.42px;font-size:12.5px;color:#bbbbbb;transform:scaleX(0.9085);transform-origin:0 0;">Variables</div>
<div class="a" style="left:54px;top:848px;width:983px;height:24px;background:transparent;border:1px solid #5e6263;border-radius:3px"></div>
<svg class="a" style="left:61px;top:853px;" width="16" height="13" viewBox="0 0 16 13"><path d="M1.5 6.5L5.5 10.5L14 1.5" stroke="#d0642a" stroke-width="2.5" fill="none"/></svg>
<div class="t" style="left:80.7px;top:853.80px;font-size:13px;color:#bbbbbb;transform:scaleX(1.0030);transform-origin:0 0;">&quot;Thread-1&quot;@2,147 in group &quot;main&quot;: RUNNING</div>
<svg class="a" style="left:1019px;top:856px;" width="11" height="7" viewBox="0 0 11 7"><path d="M0.5 0.5H10.5L5.5 6.5Z" fill="#a0a0a0"/></svg>
<svg class="a" style="left:1048px;top:852px;" width="12" height="15" viewBox="0 0 12 15"><path d="M6 14V2M1.5 6.5L6 2L10.5 6.5" stroke="#5a5a5a" stroke-width="1.6" fill="none"/></svg>
<svg class="a" style="left:1074px;top:852px;" width="12" height="15" viewBox="0 0 12 15"><path d="M6 1V13M1.5 8.5L6 13L10.5 8.5" stroke="#c9c9c9" stroke-width="1.6" fill="none"/></svg>
<svg class="a" style="left:1099px;top:852px;" width="15" height="14" viewBox="0 0 15 14"><path d="M0.5 1H14.5L9 7.5V13.5L6 11V7.5Z" fill="#c9c9c9"/></svg>
<div class="a" style="left:51px;top:876px;width:1072px;height:1px;background:#2f3133;"></div>
<div class="a" style="left:51px;top:877px;width:1071px;height:21px;background:#4b6eaf;"></div>
<div class="t" style="left:67.7px;top:881.62px;font-size:12.5px;color:#e0e4ea;transform:scaleX(0.9868);transform-origin:0 0;">start:264, Restarter </div>
<div class="t" style="left:182px;top:881.62px;font-size:12.5px;color:#d8dde4;font-style:italic;transform:scaleX(1.0754);transform-origin:0 0;">(org.springframework.boot.devtools.restart)</div>
<div class="a" style="left:51px;top:898px;width:1071px;height:63px;background:#4f4b41;"></div>
<div class="t" style="left:67.7px;top:902.72px;font-size:12.5px;color:#8f8e88;transform:scaleX(1.0165);transform-origin:0 0;">lambda$immediateRestart$0:172, Restarter </div>
<div class="t" style="left:323px;top:902.72px;font-size:12.5px;color:#8f8e88;font-style:italic;transform:scaleX(1.0754);transform-origin:0 0;">(org.springframework.boot.devtools.restart)</div>
<div class="t" style="left:67.7px;top:923.72px;font-size:12.5px;color:#8f8e88;transform:scaleX(0.9887);transform-origin:0 0;">call:-1, 1935122449 </div>
<div class="t" style="left:183px;top:923.72px;font-size:12.5px;color:#8f8e88;font-style:italic;transform:scaleX(1.0567);transform-origin:0 0;">(org.springframework.boot.devtools.restart.Restarter$$Lambda$12)</div>
<div class="t" style="left:67.7px;top:944.72px;font-size:12.5px;color:#8f8e88;transform:scaleX(1.0069);transform-origin:0 0;">run:629, Restarter$LeakSafeThread </div>
<div class="t" style="left:277px;top:944.72px;font-size:12.5px;color:#8f8e88;font-style:italic;transform:scaleX(1.0712);transform-origin:0 0;">(org.springframework.boot.devtools.restart)</div>
<div class="a" style="left:1147px;top:845px;width:1px;height:163px;background:#323232;"></div>
<svg class="a" style="left:1128px;top:851px;" width="12" height="12" viewBox="0 0 12 12"><path d="M6 0.5V11.5M0.5 6H11.5" stroke="#c9c9c9" stroke-width="2"/></svg>
<div class="a" style="left:1129px;top:883px;width:11px;height:2px;background:#5a5a5a;"></div>
<svg class="a" style="left:1129px;top:905px;" width="11" height="6" viewBox="0 0 11 6"><path d="M0 6L5.5 0L11 6Z" fill="#5a5a5a"/></svg>
<svg class="a" style="left:1129px;top:931px;" width="11" height="6" viewBox="0 0 11 6"><path d="M0 0L5.5 6L11 0Z" fill="#5a5a5a"/></svg>
<svg class="a" style="left:1128px;top:954px;" width="13" height="14" viewBox="0 0 13 14"><path d="M3.5 12.5H0.5V0.5H9.5V3" stroke="#5a5a5a" stroke-width="1.2" fill="none"/><rect x="3.5" y="3.5" width="9" height="10" fill="none" stroke="#5a5a5a" stroke-width="1.2"/><path d="M5.5 7H10.5M5.5 9.5H10.5" stroke="#5a5a5a" stroke-width="1.1"/></svg>
<div class="a" style="left:1124px;top:977px;width:22px;height:22px;background:#4c5052;border-radius:3px"></div>
<svg class="a" style="left:1126px;top:983px;" width="18" height="10" viewBox="0 0 18 10"><circle cx="4.5" cy="5" r="3.5" fill="none" stroke="#c9c9c9" stroke-width="1.6"/><circle cx="13.5" cy="5" r="3.5" fill="none" stroke="#c9c9c9" stroke-width="1.6"/><path d="M8 4.5H10" stroke="#c9c9c9" stroke-width="1.4"/></svg>
<svg class="a" style="left:1150px;top:851px;" width="10" height="10" viewBox="0 0 10 10"><path d="M1 0.5L9 5L1 9.5Z" fill="#9b9b9b"/></svg>
<svg class="a" style="left:1150px;top:870px;" width="10" height="10" viewBox="0 0 10 10"><path d="M1 0.5L9 5L1 9.5Z" fill="#9b9b9b"/></svg>
<svg class="a" style="left:1168px;top:849px;" width="15" height="15" viewBox="0 0 15 15"><circle cx="7.5" cy="7.5" r="7" fill="#bd8b36"/><circle cx="8" cy="6.8" r="2.4" stroke="#3d2f12" stroke-width="1.2" fill="none"/><path d="M5.6 4.3V12.5" stroke="#3d2f12" stroke-width="1.2"/></svg>
<svg class="a" style="left:1171px;top:870px;" width="11" height="12" viewBox="0 0 11 12"><rect x="0" y="0" width="11" height="2.6" fill="#d29a3a"/><rect x="0" y="4.5" width="11" height="2.6" fill="#d29a3a"/><rect x="0" y="9" width="11" height="2.6" fill="#d29a3a"/></svg>
<div class="t" style="left:1187px;top:849.00px;font-size:13px;color:#ef7a73;transform:scaleX(1.0058);transform-origin:0 0;">failureHandler</div>
<div class="t" style="left:1274px;top:849.00px;font-size:13px;color:#bbbbbb;">=</div>
<div class="t" style="left:1286px;top:849.00px;font-size:13px;color:#8e8e8e;transform:scaleX(0.9842);transform-origin:0 0;">{FailureHandler$lambda@2191}</div>
<div class="t" style="left:1187px;top:868.70px;font-size:13px;color:#ef7a73;transform:scaleX(1.0133);transform-origin:0 0;">this</div>
<div class="t" style="left:1211.5px;top:868.70px;font-size:13px;color:#bbbbbb;">=</div>
<div class="t" style="left:1224px;top:868.70px;font-size:13px;color:#8e8e8e;transform:scaleX(0.9687);transform-origin:0 0;">{Restarter@2060}</div>
<div class="a" style="left:0px;top:1008px;width:1920px;height:22px;background:#3c3f41;"></div>
<div class="a" style="left:0px;top:1007px;width:1920px;height:1px;background:#323232;"></div>
<div class="a" style="left:238px;top:1008px;width:85px;height:21px;background:#2f3133;"></div>
<div class="a" style="left:0px;top:1029px;width:1920px;height:1px;background:#323232;"></div>
<svg class="a" style="left:32px;top:1013px;" width="14" height="13" viewBox="0 0 14 13"><path d="M2 0.5V12.5M2 6H9" stroke="#c9c9c9" stroke-width="1.8" fill="none"/><path d="M6 6V2M3.5 4L6.5 1L9.5 4" stroke="#c9c9c9" stroke-width="1.6" fill="none"/></svg>
<div class="t" style="left:48px;top:1014.02px;font-size:12.5px;color:#bbbbbb;transform:scaleX(0.9039);transform-origin:0 0;">9: Git</div>
<div class="a" style="left:48px;top:1026px;width:6px;height:1px;background:#bbbbbb;"></div>
<svg class="a" style="left:95px;top:1013px;" width="14" height="13" viewBox="0 0 14 13"><circle cx="5" cy="5" r="3.8" stroke="#c9c9c9" stroke-width="1.8" fill="none"/><path d="M8 8L12 12" stroke="#c9c9c9" stroke-width="2"/></svg>
<div class="t" style="left:111px;top:1014.02px;font-size:12.5px;color:#bbbbbb;transform:scaleX(0.9159);transform-origin:0 0;">3: Find</div>
<div class="a" style="left:111px;top:1026px;width:6px;height:1px;background:#bbbbbb;"></div>
<svg class="a" style="left:169px;top:1013px;" width="14" height="13" viewBox="0 0 14 13"><path d="M0 1.5H2M0 5.5H2M0 9.5H2M4 1.5H11M4 5.5H11M4 9.5H11" stroke="#c9c9c9" stroke-width="1.8"/></svg>
<div class="t" style="left:184px;top:1014.02px;font-size:12.5px;color:#bbbbbb;transform:scaleX(0.8879);transform-origin:0 0;">6: TODO</div>
<div class="a" style="left:184px;top:1026px;width:6px;height:1px;background:#bbbbbb;"></div>
<svg class="a" style="left:250px;top:1013px;" width="14" height="13" viewBox="0 0 14 13"><ellipse cx="6" cy="7" rx="4.5" ry="5" fill="#c9c9c9"/><path d="M2 1.5L4 3.5M10 1.5L8 3.5M0 6H12M0 9.5H12" stroke="#c9c9c9" stroke-width="1.2"/><circle cx="11" cy="11" r="2" fill="#1bd31b"/></svg>
<div class="t" style="left:266px;top:1014.02px;font-size:12.5px;color:#dddddd;transform:scaleX(0.9264);transform-origin:0 0;">5: Debug</div>
<div class="a" style="left:266px;top:1026px;width:6px;height:1px;background:#dddddd;"></div>
<svg class="a" style="left:335px;top:1013px;" width="14" height="13" viewBox="0 0 14 13"><rect x="0.5" y="0.5" width="12" height="11" fill="#c9c9c9"/><path d="M3 3L6 5.5L3 8" stroke="#3c3f41" stroke-width="1.4" fill="none"/></svg>
<div class="t" style="left:350px;top:1014.02px;font-size:12.5px;color:#bbbbbb;transform:scaleX(0.9739);transform-origin:0 0;">Terminal</div>
<svg class="a" style="left:416px;top:1013px;" width="14" height="13" viewBox="0 0 14 13"><path d="M1 3.5L4.5 0.5L6.5 2.5L5 4L11.5 10.5L10 12L3.5 5.5L2.5 6.5Z" fill="#c9c9c9"/></svg>
<div class="t" style="left:433px;top:1014.02px;font-size:12.5px;color:#bbbbbb;transform:scaleX(0.9714);transform-origin:0 0;">Build</div>
<svg class="a" style="left:482px;top:1013px;" width="14" height="13" viewBox="0 0 14 13"><rect x="0.5" y="0.5" width="11" height="11" fill="none" stroke="#c9c9c9" stroke-width="1.2"/><path d="M0.5 3H11.5" stroke="#c9c9c9" stroke-width="1.5"/><rect x="5" y="5" width="6" height="6" fill="#c9c9c9"/></svg>
<div class="t" style="left:497px;top:1014.02px;font-size:12.5px;color:#bbbbbb;transform:scaleX(0.8981);transform-origin:0 0;">Java Enterprise</div>
<svg class="a" style="left:597px;top:1013px;" width="14" height="13" viewBox="0 0 14 13"><path d="M1 10C1 4 5 1.5 12 1C10.5 7.5 7.5 11 3.5 11C2.5 11 1.5 10.5 1 10Z" fill="#c9c9c9"/><path d="M2 10L8 4" stroke="#3c3f41" stroke-width="1"/></svg>
<div class="t" style="left:615px;top:1014.02px;font-size:12.5px;color:#bbbbbb;transform:scaleX(0.9410);transform-origin:0 0;">Spring</div>
<svg class="a" style="left:1819px;top:1013px;" width="13" height="13" viewBox="0 0 13 13"><circle cx="6.5" cy="6.5" r="6.2" fill="#3ea54a"/><path d="M5.5 4L7 3V10" stroke="#ffffff" stroke-width="1.3" fill="none"/></svg>
<div class="t" style="left:1837px;top:1014.42px;font-size:12.5px;color:#bbbbbb;transform:scaleX(0.9060);transform-origin:0 0;">Event Log</div>
<svg class="a" style="left:6px;top:1033px;" width="13" height="13" viewBox="0 0 13 13"><rect x="3.5" y="0.5" width="9" height="9" fill="none" stroke="#9a9a9a" stroke-width="1"/><path d="M0.5 3.5V12.5H9.5" fill="none" stroke="#9a9a9a" stroke-width="1"/></svg>
<div class="t" style="left:27px;top:1033.00px;font-size:13px;color:#bbbbbb;transform:scaleX(1.0255);transform-origin:0 0;">All files are up-to-date (2 minutes ago)</div>
<div class="t" style="left:1672px;top:1034.42px;font-size:12.5px;color:#bbbbbb;transform:scaleX(0.9591);transform-origin:0 0;">264:1</div>
<div class="t" style="left:1715px;top:1034.42px;font-size:12.5px;color:#8c8c8c;transform:scaleX(0.8226);transform-origin:0 0;">LF</div>
<div class="t" style="left:1739px;top:1034.42px;font-size:12.5px;color:#8c8c8c;transform:scaleX(0.9601);transform-origin:0 0;">UTF-8</div>
<div class="t" style="left:1784px;top:1034.42px;font-size:12.5px;color:#8c8c8c;">4 spaces</div>
<div class="a" style="left:1832px;top:1028px;width:75px;height:22px;background:#ffffff;"></div>
<svg class="a" style="left:1808px;top:1022px;" width="34" height="31" viewBox="0 0 34 31"><g transform="rotate(-16 17 15.5)"><rect x="4" y="3" width="26" height="25" rx="4" fill="#f2581e"/><path d="M25 9C21 6.5 12 6.5 10 10C8.5 13 13 14 18 14.5C23 15 23 19 18 20C14 20.8 10 19.5 8 18.5L7.5 21.5C11 23.5 19 24 23 21.5C27 19 26 14.5 19 13C13 12 13 10 17 9.6C20 9.3 23 10.5 24.5 11.5Z" fill="#ffffff"/></g></svg>
<svg class="a" style="left:1845px;top:1032px;" width="14" height="15" viewBox="0 0 14 15"><rect x="1" y="3.5" width="12" height="6.5" fill="none" stroke="#1e6ec8" stroke-width="1.8"/><path d="M7 0V15" stroke="#1e6ec8" stroke-width="1.8"/></svg>
<svg class="a" style="left:1866px;top:1033px;" width="17" height="13" viewBox="0 0 17 13"><rect x="0.9" y="0.9" width="15.2" height="11.2" rx="1.5" fill="none" stroke="#1e6ec8" stroke-width="1.8"/><path d="M3 4H5M7 4H9M11 4H13.5M3 6.8H5M7 6.8H9M11 6.8H13.5M4 9.5H13" stroke="#1e6ec8" stroke-width="1.3"/></svg>
<svg class="a" style="left:1889px;top:1032px;" width="15" height="15" viewBox="0 0 15 15"><path d="M3 0.5L1 4M3 2H6.5M4.5 2L6 4M10 0.5L8 4M10 2H14M11.5 2L13 4" stroke="#1e6ec8" stroke-width="1.3" fill="none"/><path d="M1.5 5.5V15M1.5 5.5H13.5V14.5H11.5" stroke="#1e6ec8" stroke-width="1.7" fill="none"/><rect x="4.5" y="7.5" width="6" height="6" fill="none" stroke="#1e6ec8" stroke-width="1.4"/><path d="M4.5 10.5H10.5" stroke="#1e6ec8" stroke-width="1.2"/></svg>
<div class="a" style="left:1879px;top:1056px;width:16px;height:2px;background:#e0e0e0;"></div>
<div class="a" style="left:1915px;top:1050px;width:1px;height:8px;background:#777777;"></div>
<div class="a" style="left:159px;top:1056px;width:16px;height:2px;background:#2f7fd8;"></div>
<div class="a" style="left:196px;top:1056px;width:16px;height:2px;background:#5a5a5a;"></div>
<div class="a" style="left:307px;top:1056px;width:16px;height:2px;background:#2fbf7a;"></div>
<div class="a" style="left:350px;top:1056px;width:6px;height:2px;background:#c8302a;"></div>
<div class="a" style="left:420px;top:1056px;width:16px;height:2px;background:#3fa9e0;"></div>
<div class="a" style="left:462px;top:1056px;width:6px;height:2px;background:#e0632a;"></div>
<div class="a" style="left:608px;top:1056px;width:8px;height:2px;background:#2fb8b0;"></div>
<div class="a" style="left:21px;top:58px;width:1px;height:950px;background:#2b2b2b;"></div>
<div class="a" style="left:1899px;top:58px;width:1px;height:950px;background:#2b2b2b;"></div>
<div class="t" style="left:6.60px;top:116.7px;font-size:12px;color:#bbbbbb;transform-origin:0 0;transform:rotate(-90deg) scaleX(0.9884)">1: Project</div>
<div class="t" style="left:6.60px;top:214px;font-size:12px;color:#bbbbbb;transform-origin:0 0;transform:rotate(-90deg) scaleX(0.9899)">7: Structure</div>
<div class="t" style="left:6.60px;top:820px;font-size:12px;color:#bbbbbb;transform-origin:0 0;transform:rotate(-90deg) scaleX(0.9300)">2: Favorites</div>
<div class="t" style="left:6.60px;top:918.6px;font-size:12px;color:#bbbbbb;transform-origin:0 0;transform:rotate(-90deg) scaleX(0.9347)">Persistence</div>
<div class="t" style="left:6.60px;top:979.8px;font-size:12px;color:#bbbbbb;transform-origin:0 0;transform:rotate(-90deg) scaleX(0.9404)">Web</div>
<div class="a" style="left:18px;top:110px;width:1px;height:6px;background:#bbbbbb;"></div>
<div class="a" style="left:18px;top:207px;width:1px;height:6px;background:#bbbbbb;"></div>
<div class="a" style="left:18px;top:813px;width:1px;height:6px;background:#bbbbbb;"></div>
<svg class="a" style="left:6px;top:122px;" width="12" height="10" viewBox="0 0 12 10"><path d="M0.5 0.5H5L6 2H11.5V9.5H0.5Z" fill="#c9c9c9"/></svg>
<svg class="a" style="left:6px;top:218px;" width="12" height="10" viewBox="0 0 12 10"><rect x="6" y="0" width="4" height="4" fill="#c9c9c9"/><rect x="0" y="5.5" width="4" height="4" fill="#c9c9c9"/><rect x="6" y="5.5" width="4" height="4" fill="#c9c9c9"/></svg>
<svg class="a" style="left:4px;top:825px;" width="15" height="14" viewBox="0 0 15 14"><path d="M7.5 0.5L9.5 5.2L14.5 5.5L10.7 8.7L12 13.5L7.5 10.8L3 13.5L4.3 8.7L0.5 5.5L5.5 5.2Z" fill="#c9c9c9"/></svg>
<svg class="a" style="left:6px;top:923px;" width="13" height="13" viewBox="0 0 13 13"><rect x="0" y="0" width="9" height="9" fill="#c9c9c9"/><path d="M5 6V12.5M7.5 6V12.5M10 6V12.5M12 6V12.5" stroke="#c9c9c9" stroke-width="1"/><rect x="4" y="5" width="9" height="1" fill="#3c3f41"/></svg>
<svg class="a" style="left:5px;top:983px;" width="14" height="14" viewBox="0 0 14 14"><circle cx="7" cy="7" r="6.5" fill="#c9c9c9"/><path d="M3 3C5 5 4 7 6 8C8 9 7 11 8 13M9 1.5C9 4 11 5 13 5" stroke="#3c3f41" stroke-width="1.4" fill="none"/></svg>
<div class="t" style="left:1914.90px;top:85.7px;font-size:12px;color:#bbbbbb;transform-origin:0 0;transform:rotate(90deg) scaleX(0.9662)">Maven</div>
<div class="t" style="left:1914.90px;top:158px;font-size:12px;color:#bbbbbb;transform-origin:0 0;transform:rotate(90deg) scaleX(0.9480)">Database</div>
<div class="t" style="left:1914.90px;top:242.5px;font-size:12px;color:#bbbbbb;transform-origin:0 0;transform:rotate(90deg) scaleX(1.0271)">Ant</div>
<div class="t" style="left:1914.90px;top:301px;font-size:12px;color:#bbbbbb;transform-origin:0 0;transform:rotate(90deg) scaleX(1.0171)">Bean Validation</div>
<div class="t" style="left:1904px;top:67.15px;font-size:14px;color:#c9c9c9;font-weight:bold;font-style:italic;transform:scaleX(1.0443);transform-origin:0 0;">m</div>
<svg class="a" style="left:1905px;top:141px;" width="12" height="13" viewBox="0 0 12 13"><ellipse cx="6" cy="2.5" rx="5.5" ry="2.3" fill="#c9c9c9"/><path d="M0.5 4V10.5C0.5 12 11.5 12 11.5 10.5V4" fill="#c9c9c9"/><path d="M0.5 6C2 7.5 10 7.5 11.5 6M0.5 9C2 10.5 10 10.5 11.5 9" stroke="#3c3f41" stroke-width="0.9" fill="none"/></svg>
<svg class="a" style="left:1904px;top:225px;" width="14" height="13" viewBox="0 0 14 13"><ellipse cx="7" cy="8.5" rx="3" ry="4" fill="#c9c9c9"/><circle cx="7" cy="3" r="2.2" fill="#c9c9c9"/><path d="M1 4L4 6.5M13 4L10 6.5M0.5 9H3.5M13.5 9H10.5M1 13L4 11M13 13L10 11" stroke="#c9c9c9" stroke-width="1.2"/></svg>
<svg class="a" style="left:1904px;top:283px;" width="14" height="13" viewBox="0 0 14 13"><circle cx="6" cy="6" r="5.5" fill="#c9c9c9"/><path d="M6 12L13 5" stroke="#3c3f41" stroke-width="2.5"/><path d="M7 9L9 11L13.5 6" stroke="#c9c9c9" stroke-width="1.5" fill="none"/></svg>
</body></html>
